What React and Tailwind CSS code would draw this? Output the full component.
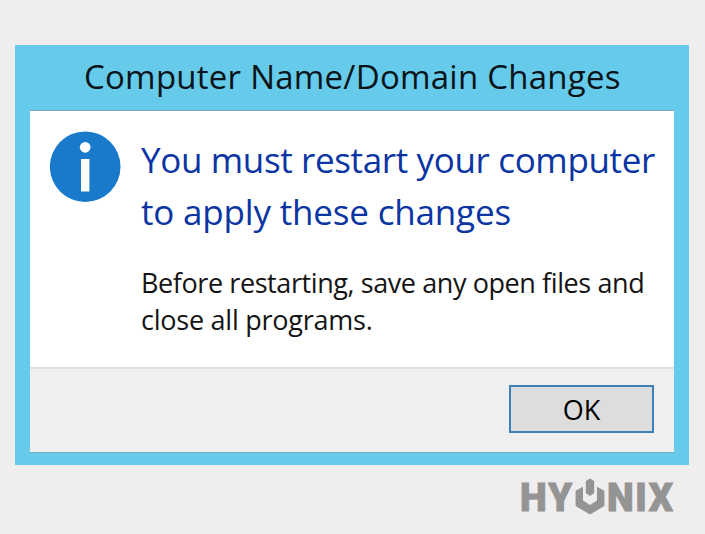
import React from "react";

const InfoIcon = () => (
  <svg className="mt-5 ml-5 w-[71px] h-[71px] shrink-0" viewBox="0 0 71 71">
    <circle cx="35.2" cy="35.7" r="35.3" fill="#1979ca" />
    <circle cx="35.2" cy="16.3" r="5.4" fill="#fff" />
    <rect x="31" y="28" width="8.4" height="32.5" fill="#fff" />
  </svg>
);

const HyonixLogo = () => (
  <div className="flex items-start text-[#949494] font-['Roboto',sans-serif] font-black text-[38px] leading-[37px]">
    <span className="mt-[2px] w-[55px] whitespace-nowrap tracking-[2px] [-webkit-text-stroke:0.9px_#949494]">HY</span>
    <svg className="w-[30px] h-[37px] shrink-0" viewBox="0 0 30 37" fill="currentColor">
      <path d="M10.8 3 15 .6 19.2 3V15L15 18 10.8 15Z" />
      <path d="M.6 12.7 8 8.7V22.5L15 27 22 22.5V8.7L29.4 12.7V28L15 36.5.6 28Z" />
    </svg>
    <span className="mt-[2px] ml-[2px] w-[67px] whitespace-nowrap tracking-[1.6px] [-webkit-text-stroke:0.9px_#949494]">NIX</span>
  </div>
);

const App = () => {
  return (
    <div className="w-[705px] h-[534px] overflow-hidden bg-[#efedee] pt-[45px] pl-[15px] font-['Open_Sans','Noto_Sans',sans-serif]">
      <div className="w-[674px] h-[420px] bg-[#66caea] px-[15px]">
        <h1 className="h-[65px] pl-[54px] pt-[8px] text-[33px] leading-[48px] tracking-[0.24px] text-[#0a1418] whitespace-nowrap">
          Computer Name/Domain Changes
        </h1>
        <div className="w-[644px] h-[343px] bg-white border-t border-t-[#7fa5bd] border-b border-b-[#76aabf]">
          <div className="flex h-[256px]">
            <InfoIcon />
            <div className="ml-5 pt-[23px] whitespace-nowrap">
              <h2 className="text-[35px] leading-[52px] text-[#0a35a3]">
                <span className="block tracking-[-0.36px]">You must restart your computer</span>
                <span className="block tracking-[-0.18px]">to apply these changes</span>
              </h2>
              <p className="mt-[26px] text-[27px] leading-[37px] text-[#141414]">
                <span className="block tracking-[-0.41px]">Before restarting, save any open files and</span>
                <span className="block tracking-[-0.24px]">close all programs.</span>
              </p>
            </div>
          </div>
          <div className="h-[85px] bg-[#efefef] border-t-2 border-t-[#dfdfdf] flex justify-end pr-[20px] pt-[16px]">
            <button className="w-[145px] h-[48px] pt-[2px] bg-[#dddddd] border-2 border-[#3c82b8] text-[27px] text-black">
              OK
            </button>
          </div>
        </div>
      </div>
      <div className="mt-[13px] ml-[505px]">
        <HyonixLogo />
      </div>
    </div>
  );
};

export default App;
